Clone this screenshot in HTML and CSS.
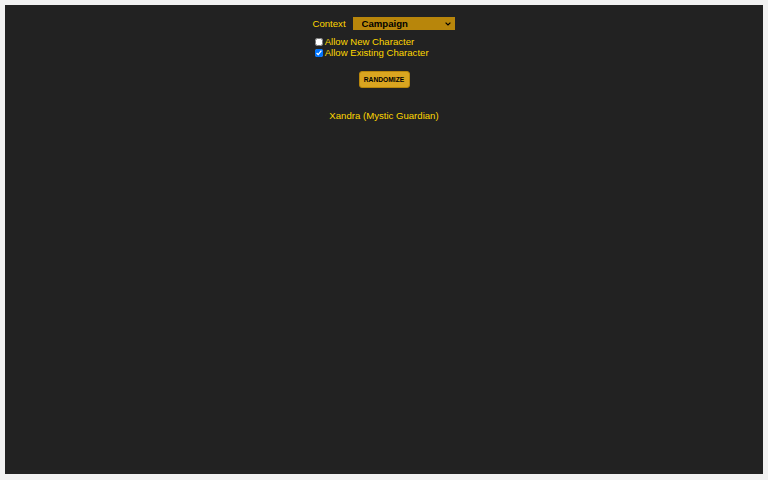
FILE: index.html
```html
<!DOCTYPE html>
<html>
<head>
<meta charset="utf-8">
<link rel="stylesheet" href="styles.css">
</head>
<body>
<div class="panel">
  <div class="controls">
    <div class="context-row">
      <label class="label" for="ctx">Context</label>
      <div class="select-wrap">
        <select id="ctx" class="select">
          <option>Campaign</option>
          <option>One-Shot</option>
        </select>
        <svg class="chev" width="6" height="4" viewBox="0 0 6 4"><path d="M0.6 0.6 L3 3 L5.4 0.6" fill="none" stroke="#000" stroke-width="1.2"/></svg>
      </div>
    </div>
    <div class="checks">
      <label class="check"><input type="checkbox" class="box"> Allow New Character</label>
      <label class="check"><input type="checkbox" class="box" checked> Allow Existing Character</label>
    </div>
  </div>
  <button class="btn">RANDOMIZE</button>
  <div class="result">Xandra (Mystic Guardian)</div>
</div>
</body>
</html>
```

FILE: styles.css
```css
html, body {
  margin: 0;
  padding: 0;
}
body {
  background: #f2f2f2;
  padding: 5px;
  font-family: "Liberation Sans", Arial, sans-serif;
}
.panel {
  background: #222222;
  height: 469px;
  display: flex;
  flex-direction: column;
  align-items: center;
  padding-top: 12px;
  box-sizing: border-box;
  color: #ffd700;
  font-size: 9.6px;
}
.controls {
  display: flex;
  flex-direction: column;
  width: 142px;
  margin-left: -1px;
}
.context-row {
  display: flex;
  align-items: center;
  gap: 7px;
  height: 13px;
}
.label {
  color: #ffd700;
  line-height: 13px;
}
.select-wrap {
  position: relative;
  width: 102px;
  height: 13px;
}
.select {
  appearance: none;
  -webkit-appearance: none;
  width: 102px;
  height: 13px;
  margin: 0;
  border: none;
  border-radius: 0;
  background: #b8860b;
  color: #000;
  font-family: "Liberation Sans", Arial, sans-serif;
  font-weight: bold;
  font-size: 9.6px;
  padding: 0 0 0 9px;
  line-height: 13px;
  display: block;
}
.chev {
  position: absolute;
  right: 4px;
  top: 5px;
  pointer-events: none;
}
.checks {
  display: flex;
  flex-direction: column;
  margin-top: 6px;
  padding-left: 2px;
}
.check {
  display: flex;
  align-items: center;
  height: 11px;
  line-height: 11px;
  white-space: pre;
}
.box {
  width: 8px;
  height: 8px;
  margin: 0;
}
.btn {
  margin-top: 13px;
  width: 51px;
  height: 17px;
  padding: 0;
  background: #daa520;
  border: 1px solid #b8860b;
  border-radius: 3px;
  color: #000;
  font-family: "Liberation Sans", Arial, sans-serif;
  font-weight: bold;
  font-size: 6.7px;
}
.result {
  margin-top: 22px;
  line-height: 11px;
  color: #ffd700;
}
```
